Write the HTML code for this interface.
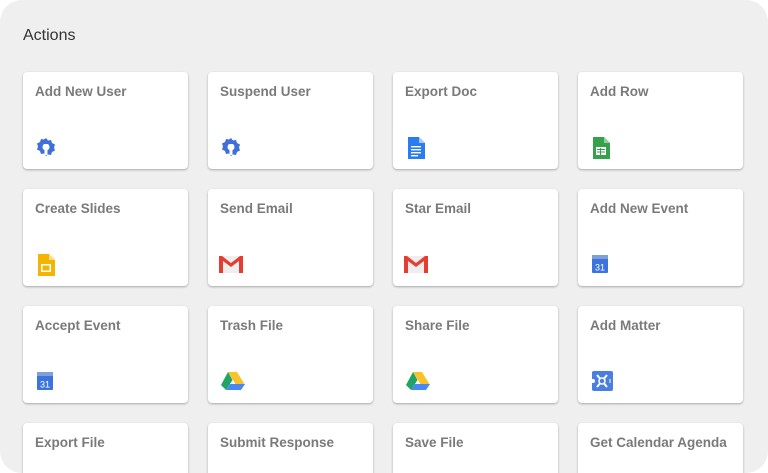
<!DOCTYPE html>
<html><head><style>
html,body{margin:0;width:768px;height:473px;overflow:hidden;background:#fff;font-family:"Liberation Sans",sans-serif;}
.panel{position:absolute;left:0;top:0;width:768px;height:473px;background:#efefef;border-radius:22px;overflow:hidden}
h1{position:absolute;left:23px;top:27px;margin:0;font-size:16px;font-weight:normal;color:#333}
.card{position:absolute;width:165px;height:97px;background:#fff;border-radius:4px;box-shadow:0 1px 2px rgba(0,0,0,.3);}
.card span{position:absolute;left:12px;top:12px;font-size:13.5px;font-weight:bold;color:#7a7a7a}
.card svg{position:absolute;left:12px;top:64px}
</style></head><body><div class="panel">
<h1>Actions</h1>
<div id="g"></div>
</div>
<script>
var ic={
adm:'<svg width="22" height="22" viewBox="0 0 22 22"><path d="M11 2l2 2.5 3-.5 1 3 3 1.5-1 3 1 3-3 1.5-1 3-3-.5L11 20l-2-2.5-3 .5-1-3-3-1.5 1-3-1-3 3-1.5 1-3 3 .5z" fill="#3f6fd8"/><circle cx="11" cy="11" r="3.5" fill="#fff"/><rect x="9.5" y="11" width="3" height="8" fill="#fff"/><rect x="8" y="5" width="6" height="3" fill="#3f6fd8"/></svg>',
doc:'<svg width="22" height="24" viewBox="0 0 22 24"><path d="M3 1h11l6 6v16H3z" fill="#2a7cf2"/><path d="M14 1v6h6z" fill="#a6c8fa"/><g fill="#fff"><rect x="6" y="10" width="10" height="1.4"/><rect x="6" y="13" width="10" height="1.4"/><rect x="6" y="16" width="10" height="1.4"/><rect x="6" y="19" width="7" height="1.4"/></g></svg>',
sheet:'<svg width="22" height="24" viewBox="0 0 22 24"><path d="M3 1h11l6 6v16H3z" fill="#36a04a"/><path d="M14 1v6h6z" fill="#8fd09a"/><rect x="6" y="11" width="10" height="8" fill="#fff"/><g fill="#36a04a"><rect x="7" y="13" width="8" height="1"/><rect x="7" y="15.5" width="8" height="1"/><rect x="10" y="12" width="1" height="7"/></g></svg>',
slide:'<svg width="22" height="24" viewBox="0 0 22 24"><path d="M3 1h11l6 6v16H3z" fill="#f5b400"/><path d="M14 1v6h6z" fill="#fbdc80"/><rect x="6" y="11" width="10" height="8" fill="#fff"/><rect x="7.5" y="12.5" width="7" height="5" fill="#f5b400"/></svg>',
gm:'<svg width="28" height="22" viewBox="0 0 28 22"><rect x="2" y="3" width="24" height="17" fill="#eee"/><path d="M2 3v17h4V8l8 6 8-6v12h4V3h-3l-9 7-9-7z" fill="#e53d30"/></svg>',
cal:'<svg width="20" height="22" viewBox="0 0 20 22"><rect x="2" y="2" width="16" height="18" rx="1" fill="#3c74de"/><rect x="2" y="2" width="16" height="4" fill="#7f9fd8"/><text x="10" y="17.5" font-size="9" fill="#fff" text-anchor="middle" font-family="Liberation Sans">31</text></svg>',
drv:'<svg width="26" height="22" viewBox="0 0 26 22"><path d="M8 2h9l8 13h-9z" fill="#f8c22a"/><path d="M8 2l4.5 8L6 20 1 15z" fill="#1fa463"/><path d="M6 20l4-6h15l-4 6z" fill="#4688f4"/></svg>',
vault:'<svg width="24" height="22" viewBox="0 0 24 22"><rect x="2" y="1" width="21" height="20" rx="2" fill="#4a7fe0"/><circle cx="3" cy="11" r="2" fill="#fff"/><g stroke="#fff" stroke-width="2"><path d="M7 5l10 12M17 5L7 17"/></g><circle cx="12" cy="11" r="3" fill="#4a7fe0" stroke="#fff" stroke-width="1.5"/><rect x="19.5" y="9" width="1" height="4" fill="#fff"/></svg>'};
var d=[["Add New User","adm"],["Suspend User","adm"],["Export Doc","doc"],["Add Row","sheet"],["Create Slides","slide"],["Send Email","gm"],["Star Email","gm"],["Add New Event","cal"],["Accept Event","cal"],["Trash File","drv"],["Share File","drv"],["Add Matter","vault"],["Export File",""],["Submit Response",""],["Save File",""],["Get Calendar Agenda",""]];
var h='';d.forEach(function(c,i){var x=23+(i%4)*185,y=72+Math.floor(i/4)*117;
var s=ic[c[1]]||'';if(c[1]=='gm')s=s.replace('<svg','<svg style="left:9px"');
h+='<div class="card" style="left:'+x+'px;top:'+y+'px;'+(y>400?'height:60px':'')+'"><span>'+c[0]+'</span>'+s+'</div>';});
document.getElementById('g').outerHTML=h;
</script>
</body></html>
